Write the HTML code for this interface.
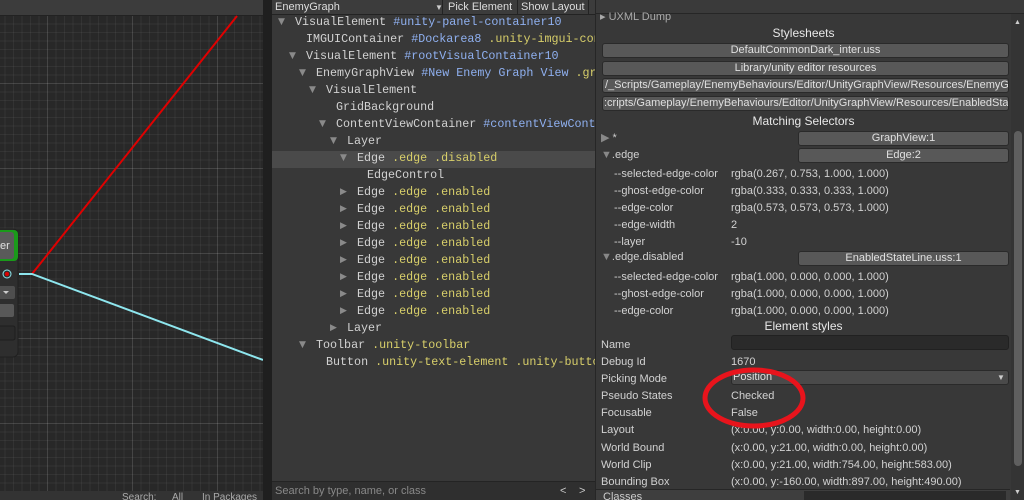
<!DOCTYPE html>
<html><head><meta charset="utf-8"><style>
*{margin:0;padding:0;box-sizing:border-box}
body{width:1024px;height:500px;overflow:hidden;background:#383838;position:relative;font-family:"Liberation Sans",sans-serif;font-size:11px;color:#d2d2d2}
.a{position:absolute;white-space:nowrap}
#graph{left:0;top:0;width:263px;height:500px;background:#282828;overflow:hidden}
#grid{left:0;top:16px;width:263px;height:476px;
background-image:
linear-gradient(90deg,rgba(255,255,255,.09) 1px,transparent 1px),
linear-gradient(0deg,rgba(255,255,255,.09) 1px,transparent 1px),
linear-gradient(90deg,rgba(255,255,255,.05) 1px,transparent 1px),
linear-gradient(0deg,rgba(255,255,255,.05) 1px,transparent 1px);
background-size:85px 85px,85px 85px,8.5px 8.5px,8.5px 8.5px;
background-position:47px 0,0 68px,47px 0,0 68px}
.tree div{height:17px;line-height:17px;overflow:visible}
.mono{font-family:"Liberation Mono",monospace;font-size:11.7px;color:#d2d2d2}
.y{color:#d8cf6a}.b{color:#8fb0f0}
.tri{color:#8a8a8a;font-size:9px;display:inline-block;width:17px;line-height:10px;vertical-align:1px;font-family:"DejaVu Sans",sans-serif}
.btn{background:#585858;border:1px solid #2a2a2a;border-radius:3px;color:#e0e0e0;text-align:center;height:15px;line-height:13px;overflow:hidden}
.h{color:#e8e8e8;font-size:12px;text-align:center}
</style></head><body>
<div class="a" id="graph">
 <div class="a" style="left:0;top:0;width:263px;height:16px;background:#3c3c3c;border-bottom:1px solid #222"></div>
 <div class="a" id="grid"></div>
 <svg class="a" style="left:0;top:0" width="263" height="500">
  <line x1="237" y1="16" x2="32" y2="274" stroke="#e00000" stroke-width="2"/>
  <polyline points="19,274 32,274 263,360" fill="none" stroke="#8ee6ee" stroke-width="2"/>
  <rect x="-10" y="229" width="28" height="128" rx="5" fill="#2e2e2e" stroke="#202020"/>
  <rect x="-10" y="230" width="28" height="31" rx="4" fill="#1a9a1a"/>
  <rect x="-8" y="232" width="22" height="27" rx="3" fill="#5a5a5a"/>
  <text x="0" y="249" fill="#e0e0e0" font-size="11" font-family="Liberation Sans">er</text>
  <circle cx="7" cy="274" r="4" fill="#303030" stroke="#8ee6ee"/>
  <circle cx="7" cy="274" r="2" fill="#e00000"/>
  <rect x="-5" y="286" width="20" height="13" rx="2" fill="#4e4e4e"/>
  <path d="M3 291 L9 291 L6 294Z" fill="#ccc"/>
  <rect x="-5" y="304" width="19" height="13" rx="2" fill="#585858"/>
  <rect x="-5" y="326" width="20" height="14" rx="2" fill="#2a2a2a" stroke="#1e1e1e"/>
  <rect x="0" y="491" width="263" height="9" fill="#333"/>
  <text x="122" y="500" fill="#aaa" font-size="10">Search:</text>
  <text x="172" y="500" fill="#aaa" font-size="10">All</text>
  <text x="202" y="500" fill="#aaa" font-size="10">In Packages</text>
 </svg>
</div>
<div class="a" style="left:263px;top:0;width:9px;height:500px;background:#1f1f1f"></div>
<div class="a" style="left:272px;top:0;width:323px;height:500px;background:#383838;overflow:hidden">
 <div class="a" style="left:0;top:0;width:323px;height:15px;background:#3c3c3c;border-bottom:1px solid #232323"></div>
 <div class="a" style="left:3px;top:1px;color:#ddd">EnemyGraph</div>
 <div class="a" style="left:163px;top:3px;font-size:8px;color:#ccc">▼</div>
 <div class="a" style="left:170px;top:0;width:75px;height:15px;border-left:1px solid #232323;padding-left:5px;color:#ddd;line-height:14px">Pick Element</div>
 <div class="a" style="left:245px;top:0;width:72px;height:15px;border-left:1px solid #232323;border-right:1px solid #232323;padding-left:3px;color:#ddd;line-height:14px">Show Layout</div>
 <div class="a" style="left:0;top:151px;width:323px;height:17px;background:#4a4a4a"></div>
 <div class="a mono tree" style="left:0;top:14px">
  <div><span class="tri" style="margin-left:6px">▼</span>VisualElement <span class="b">#unity-panel-container10</span></div>
  <div style="padding-left:34px">IMGUIContainer <span class="b">#Dockarea8</span> <span class="y">.unity-imgui-container</span></div>
  <div><span class="tri" style="margin-left:17px">▼</span>VisualElement <span class="b">#rootVisualContainer10</span></div>
  <div><span class="tri" style="margin-left:27px">▼</span>EnemyGraphView <span class="b">#New Enemy Graph View</span> <span class="y">.graph</span></div>
  <div><span class="tri" style="margin-left:37px">▼</span>VisualElement</div>
  <div style="padding-left:64px">GridBackground</div>
  <div><span class="tri" style="margin-left:47px">▼</span>ContentViewContainer <span class="b">#contentViewContainer</span></div>
  <div><span class="tri" style="margin-left:58px">▼</span>Layer</div>
  <div><span class="tri" style="margin-left:68px">▼</span>Edge <span class="y">.edge .disabled</span></div>
  <div style="padding-left:95px">EdgeControl</div>
  <div><span class="tri" style="margin-left:68px">▶</span>Edge <span class="y">.edge .enabled</span></div>
  <div><span class="tri" style="margin-left:68px">▶</span>Edge <span class="y">.edge .enabled</span></div>
  <div><span class="tri" style="margin-left:68px">▶</span>Edge <span class="y">.edge .enabled</span></div>
  <div><span class="tri" style="margin-left:68px">▶</span>Edge <span class="y">.edge .enabled</span></div>
  <div><span class="tri" style="margin-left:68px">▶</span>Edge <span class="y">.edge .enabled</span></div>
  <div><span class="tri" style="margin-left:68px">▶</span>Edge <span class="y">.edge .enabled</span></div>
  <div><span class="tri" style="margin-left:68px">▶</span>Edge <span class="y">.edge .enabled</span></div>
  <div><span class="tri" style="margin-left:68px">▶</span>Edge <span class="y">.edge .enabled</span></div>
  <div><span class="tri" style="margin-left:58px">▶</span>Layer</div>
  <div><span class="tri" style="margin-left:27px">▼</span>Toolbar <span class="y">.unity-toolbar</span></div>
  <div style="padding-left:54px">Button <span class="y">.unity-text-element .unity-button</span></div>
 </div>
 <div class="a" style="left:0;top:481px;width:323px;height:19px;background:#2f2f2f;border-top:1px solid #242424"></div>
 <div class="a" style="left:3px;top:485px;color:#888">Search by type, name, or class</div>
 <div class="a" style="left:288px;top:485px;color:#ccc">&lt;</div>
 <div class="a" style="left:307px;top:485px;color:#ccc">&gt;</div>
</div>
<div class="a" style="left:595px;top:0;width:429px;height:500px;background:#383838;overflow:hidden;border-left:1px solid #262626">
 <div class="a" style="left:0;top:0;width:429px;height:14px;background:#3a3a3a;border-bottom:1px solid #262626"></div>
 <div class="a" style="left:4px;top:10px;color:#aaa">▸ UXML Dump</div>
 <div class="a h" style="left:0;top:26px;width:415px">Stylesheets</div>
 <div class="a btn" style="left:6px;top:43px;width:407px">DefaultCommonDark_inter.uss</div>
 <div class="a btn" style="left:6px;top:61px;width:407px">Library/unity editor resources</div>
 <div class="a btn" style="left:6px;top:78px;width:407px;text-align:left;padding-left:2px">/_Scripts/Gameplay/EnemyBehaviours/Editor/UnityGraphView/Resources/EnemyGraph.uss</div>
 <div class="a btn" style="left:6px;top:96px;width:407px;text-align:left;padding-left:1px">:cripts/Gameplay/EnemyBehaviours/Editor/UnityGraphView/Resources/EnabledStateLine.uss</div>
 <div class="a h" style="left:0;top:114px;width:415px">Matching Selectors</div>
 <div class="a" style="left:5px;top:131px;color:#888">▶ <span style="color:#ccc">*</span></div>
 <div class="a btn" style="left:202px;top:131px;width:211px">GraphView:1</div>
 <div class="a" style="left:5px;top:149px"><span style="color:#888">▼</span>.edge</div>
 <div class="a btn" style="left:202px;top:148px;width:211px">Edge:2</div>
 <div class="a" style="left:18px;top:166px;line-height:17.1px">--selected-edge-color<br>--ghost-edge-color<br>--edge-color<br>--edge-width<br>--layer</div>
 <div class="a" style="left:135px;top:166px;line-height:17.1px">rgba(0.267, 0.753, 1.000, 1.000)<br>rgba(0.333, 0.333, 0.333, 1.000)<br>rgba(0.573, 0.573, 0.573, 1.000)<br>2<br>-10</div>
 <div class="a" style="left:5px;top:251px"><span style="color:#888">▼</span>.edge.disabled</div>
 <div class="a btn" style="left:202px;top:251px;width:211px">EnabledStateLine.uss:1</div>
 <div class="a" style="left:18px;top:269px;line-height:17.1px">--selected-edge-color<br>--ghost-edge-color<br>--edge-color</div>
 <div class="a" style="left:135px;top:269px;line-height:17.1px">rgba(1.000, 0.000, 0.000, 1.000)<br>rgba(1.000, 0.000, 0.000, 1.000)<br>rgba(1.000, 0.000, 0.000, 1.000)</div>
 <div class="a h" style="left:0;top:319px;width:415px">Element styles</div>
 <div class="a" style="left:135px;top:335px;width:278px;height:15px;background:#2a2a2a;border:1px solid #212121;border-radius:3px"></div>
 <div class="a" style="left:135px;top:370px;width:278px;height:15px;background:#4a4a4a;border:1px solid #2a2a2a;border-radius:3px"></div>
 <div class="a" style="left:137px;top:371px;color:#e0e0e0">Position</div>
 <div class="a" style="left:401px;top:373px;font-size:8px;color:#ccc">▼</div>
 <div class="a" style="left:5px;top:337px;line-height:17.1px">Name<br>Debug Id<br>Picking Mode<br>Pseudo States<br>Focusable<br>Layout<br>World Bound<br>World Clip<br>Bounding Box</div>
 <div class="a" style="left:135px;top:337px;line-height:17.1px">&nbsp;<br>1670<br>&nbsp;<br>Checked<br>False<br>(x:0.00, y:0.00, width:0.00, height:0.00)<br>(x:0.00, y:21.00, width:0.00, height:0.00)<br>(x:0.00, y:21.00, width:754.00, height:583.00)<br>(x:0.00, y:-160.00, width:897.00, height:490.00)</div>
 <div class="a" style="left:0;top:489px;width:414px;height:11px;background:#3e3e3e;border-top:1px solid #262626"></div>
 <div class="a" style="left:7px;top:491px;color:#ccc">Classes</div>
 <div class="a" style="left:208px;top:491px;width:202px;height:9px;background:#2a2a2a"></div>
 <svg class="a" style="left:105px;top:365px" width="106" height="66"><ellipse cx="53" cy="33" rx="49" ry="28" fill="none" stroke="#e8141c" stroke-width="5"/></svg>
 <div class="a" style="left:415px;top:14px;width:14px;height:486px;background:#343434"></div>
 <div class="a" style="left:418px;top:131px;width:8px;height:335px;background:#5f5f5f;border-radius:4px"></div>
 <div class="a" style="left:418px;top:19px;font-size:7px;color:#ccc">▲</div>
 <div class="a" style="left:418px;top:489px;font-size:7px;color:#ccc">▼</div>
</div>
</body></html>
